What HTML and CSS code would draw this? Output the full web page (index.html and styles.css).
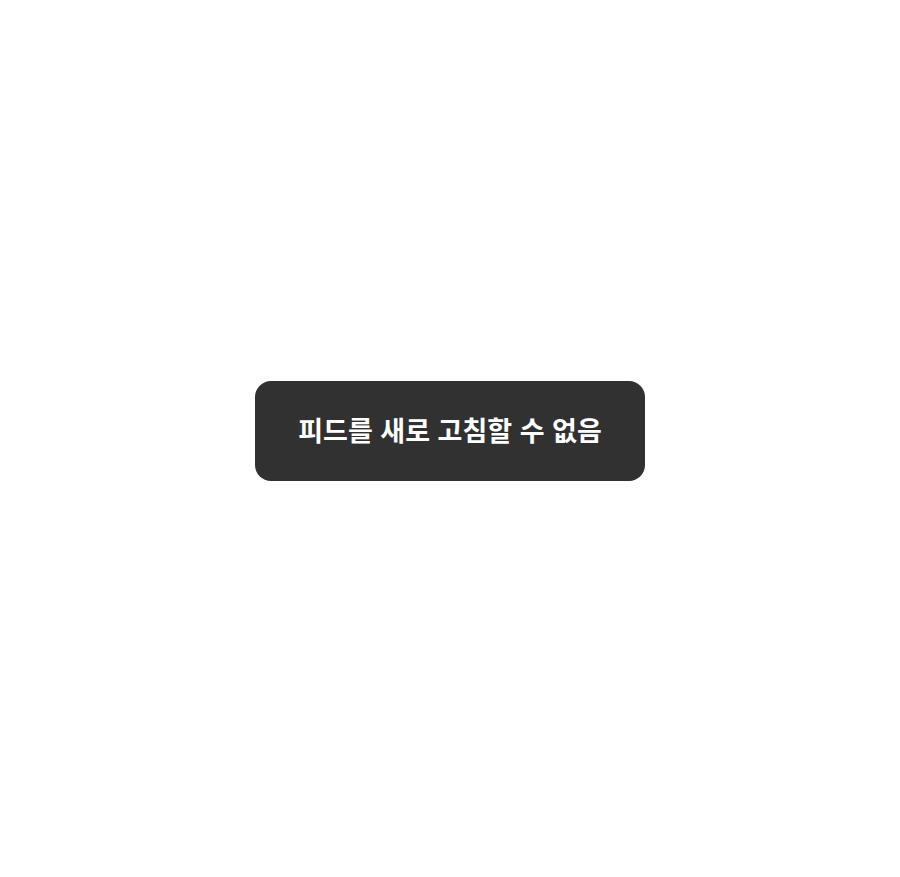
FILE: index.html
```html
<!DOCTYPE html>
<html lang="ko">
<head>
<meta charset="utf-8">
<link rel="stylesheet" href="styles.css">
</head>
<body>
<div class="page">
  <div class="toast">피드를 새로 고침할 수 없음</div>
</div>
</body>
</html>
```
FILE: styles.css
```css
html, body {
  margin: 0;
  padding: 0;
  background: #ffffff;
}
.page {
  width: 900px;
  height: 877px;
  display: flex;
  align-items: center;
  justify-content: center;
}
.toast {
  width: 390px;
  height: 100px;
  margin-bottom: 15px;
  box-sizing: border-box;
  padding-bottom: 4px;
  background: #313131;
  border-radius: 16px;
  display: flex;
  align-items: center;
  justify-content: center;
  color: #ffffff;
  font-family: "Noto Sans CJK KR", "Noto Sans", sans-serif;
  font-weight: 700;
  font-size: 27px;
  line-height: 1;
}
```
